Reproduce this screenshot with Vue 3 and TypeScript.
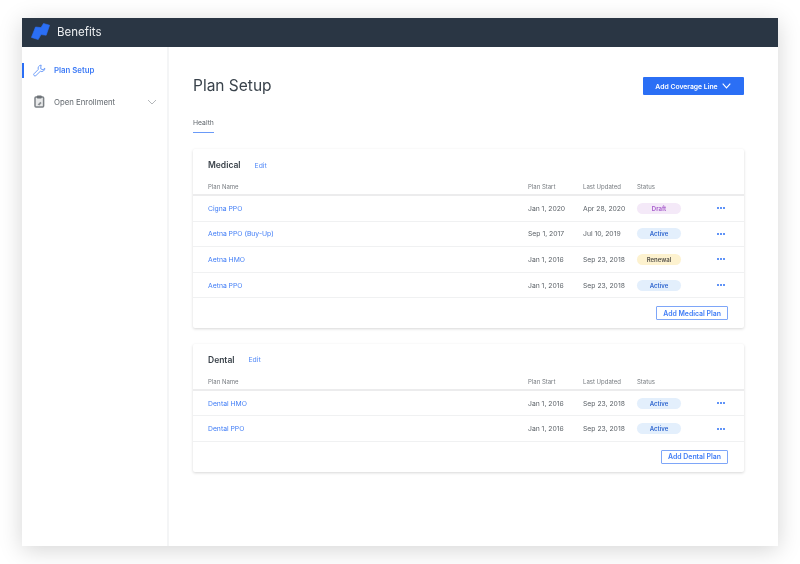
<script setup lang="ts">
interface Plan { name: string; start: string; updated: string; status: string }
interface Section { title: string; add: string; plans: Plan[] }
const sections: Section[] = [
  { title: 'Medical', add: 'Add Medical Plan', plans: [
    { name: 'Cigna PPO', start: 'Jan 1, 2020', updated: 'Apr 28, 2020', status: 'Draft' },
    { name: 'Aetna PPO (Buy-Up)', start: 'Sep 1, 2017', updated: 'Jul 10, 2019', status: 'Active' },
    { name: 'Aetna HMO', start: 'Jan 1, 2016', updated: 'Sep 23, 2018', status: 'Renewal' },
    { name: 'Aetna PPO', start: 'Jan 1, 2016', updated: 'Sep 23, 2018', status: 'Active' },
  ] },
  { title: 'Dental', add: 'Add Dental Plan', plans: [
    { name: 'Dental HMO', start: 'Jan 1, 2016', updated: 'Sep 23, 2018', status: 'Active' },
    { name: 'Dental PPO', start: 'Jan 1, 2016', updated: 'Sep 23, 2018', status: 'Active' },
  ] },
]
</script>

<template>
  <div class="page">
    <div class="window">
      <header class="topbar">
        <svg class="logo" width="19" height="17" viewBox="0 0 19 17">
          <path d="M4.5 4 L10 4.6 L12.5 0.5 L18.6 2.2 L15.2 12.2 L10 11.6 L7.2 16.6 L0.4 14.4 Z" fill="#2b6ff5" stroke="#2b6ff5" stroke-width="0.6" stroke-linejoin="round" />
        </svg>
        <span class="brand">Benefits</span>
      </header>
      <div class="body">
        <aside class="sidebar">
          <div class="nav-item active">
            <svg class="nav-icon" width="13" height="13" viewBox="0 0 13 13" fill="none" stroke="#5f93f7" stroke-width="0.9">
              <path d="M8.2 1.1 A3.2 3.2 0 0 0 5.3 5.4 L1.1 9.7 A1.2 1.2 0 0 0 2.9 11.6 L7.3 7.3 A3.2 3.2 0 0 0 11.8 4.2 L10 5.8 L7.8 4.9 L7.8 3 Z" stroke-linejoin="round" />
            </svg>
            <span>Plan Setup</span>
          </div>
          <div class="nav-item">
            <svg class="nav-icon" width="13" height="13" viewBox="0 0 13 13">
              <rect x="2" y="2" width="8.6" height="10" rx="1" fill="#e8e9ea" stroke="#7b8085" stroke-width="1.5" />
              <rect x="3.9" y="0.6" width="4.8" height="2.8" rx="0.7" fill="#6d7277" />
              <path d="M4.6 9.6 L7.4 6.8 L8.6 8 L6.4 10.4 Z" fill="#8b8f93" />
            </svg>
            <span>Open Enrollment</span>
            <svg class="nav-chev" width="10" height="6" viewBox="0 0 10 6" fill="none" stroke="#b4b7ba" stroke-width="1">
              <path d="M1 1 L5 5 L9 1" />
            </svg>
          </div>
        </aside>
        <main class="main">
          <div class="title-row">
            <h1>Plan Setup</h1>
            <button class="primary">
              <span>Add Coverage Line</span>
              <svg width="9" height="6" viewBox="0 0 9 6" fill="none" stroke="#fff" stroke-width="1.1"><path d="M0.7 0.7 L4.5 4.9 L8.3 0.7" /></svg>
            </button>
          </div>
          <div class="tabs"><span class="tab">Health</span></div>
          <section v-for="s in sections" :key="s.title" class="card">
            <div class="card-head">
              <h2>{{ s.title }}</h2>
              <a class="edit">Edit</a>
            </div>
            <div class="row head">
              <span>Plan Name</span><span>Plan Start</span><span>Last Updated</span><span>Status</span><span></span>
            </div>
            <div v-for="p in s.plans" :key="p.name" class="row">
              <a class="plan">{{ p.name }}</a>
              <span>{{ p.start }}</span>
              <span>{{ p.updated }}</span>
              <span><em class="badge" :class="p.status.toLowerCase()">{{ p.status }}</em></span>
              <span class="dots"><i></i><i></i><i></i></span>
            </div>
            <div class="card-foot"><button class="outline">{{ s.add }}</button></div>
          </section>
        </main>
      </div>
    </div>
  </div>
</template>

<style>
html, body { margin: 0; background: #fff; }
</style>

<style scoped>
.page {
  width: 800px; height: 564px; box-sizing: border-box; padding: 18px 22px;
  overflow: hidden; font-family: "Inter", "Open Sans", sans-serif; color: #4a5158;
}
.window {
  height: 528px; background: #fff; display: flex; flex-direction: column;
  box-shadow: 0 4px 22px rgba(0, 0, 0, 0.17);
  filter: blur(0.3px);
}
.topbar {
  height: 28.5px; flex: none; background: #2a3644; display: flex; align-items: center;
  padding-left: 9px; gap: 6px; box-sizing: border-box;
}
.logo { margin-top: -2px; }
.brand { color: #eef0f2; font-size: 11.5px; margin-left: 1px; }
.body { flex: 1; display: flex; min-height: 0; }
.sidebar {
  width: 147px; flex: none; box-sizing: border-box; border-right: 2px solid #f4f5f6;
  padding-top: 16px; display: flex; flex-direction: column; gap: 14px;
}
.nav-item {
  height: 20px; display: flex; align-items: center; font-size: 7.8px; color: #62686e;
  padding-left: 9px; border-left: 2px solid transparent;
}
.nav-item.active { border-left-color: #2b6ff5; color: #3f7cf6; font-weight: 600; height: 15px; }
.nav-icon { margin-right: 8px; flex: none; }
.nav-chev { margin-left: auto; margin-right: 10px; }
.main { flex: 1; padding: 30.5px 34px 0 24px; min-width: 0; }
.title-row { display: flex; justify-content: space-between; align-items: flex-start; height: 32px; }
h1 { margin: 0; font-size: 15.5px; font-weight: 400; color: #39424b; line-height: 18px; }
.primary {
  width: 101px; height: 18px; border: 0; border-radius: 1px; background: #2b6ff5; color: #fff;
  font: 600 6.8px "Inter", sans-serif; display: flex; align-items: center; justify-content: center; gap: 4px; padding: 0 1px 0 0;
}
.tabs { height: 24px; margin-bottom: 16px; }
.tab {
  display: inline-block; font-size: 6.8px; color: #62686e; height: 17px; line-height: 14px; box-sizing: border-box;
  border-bottom: 1px solid #6a9af8; width: 21px;
}
.card {
  background: #fff; border-radius: 2px; margin-bottom: 16px;
  box-shadow: 0 1px 3px rgba(0, 0, 0, 0.16);
}
.card-head { height: 32px; display: flex; align-items: center; gap: 14px; padding-left: 15px; box-sizing: border-box; }
h2 { margin: 0; font-size: 8.5px; font-weight: 600; color: #3a424a; }
.edit { font-size: 6.8px; color: #4f87f7; }
.row {
  display: grid; grid-template-columns: 320px 55px 54px 70px 1fr; padding-left: 15px; align-items: center;
  height: 25.6px; box-sizing: border-box; border-bottom: 1px solid #f0f1f2; font-size: 6.8px; color: #5d6369;
}
.row.head { height: 15px; font-size: 6px; color: #777c81; border-bottom: 2px solid #ececed; padding-bottom: 1.5px; }
.plan { color: #3f7cf6; }
.badge {
  display: block; width: 44px; height: 11px; border-radius: 6px; font-style: normal; text-align: center; font-weight: 600;
  font-size: 6px; line-height: 11px;
}
.badge.draft { background: #f4e9f8; color: #a254c9; }
.badge.active { background: #e3effc; color: #2f66cf; }
.badge.renewal { background: #fdf2cf; color: #55524a; }
.dots { display: flex; gap: 1px; padding-left: 10px; }
.dots i { width: 2px; height: 2px; border-radius: 50%; background: #2b6ff5; }
.card-foot { height: 29.5px; display: flex; justify-content: flex-end; align-items: center; padding-right: 16px; }
.outline {
  height: 14px; padding: 0 6px; background: #fff; border: 1px solid #7ea6f8; border-radius: 1px; color: #3f7cf6;
  font: 600 6.9px "Inter", sans-serif; box-sizing: border-box;
}
</style>
